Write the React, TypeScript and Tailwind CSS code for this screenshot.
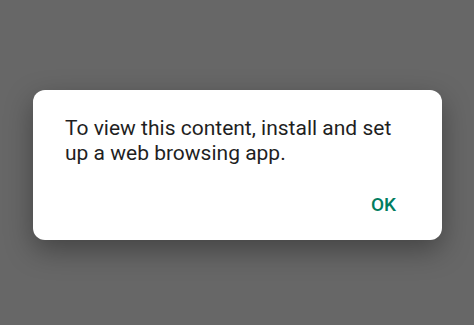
const App = () => {
  return (
    <div className="h-[325px] w-[474px] overflow-hidden bg-[#676767] pl-[33px] pt-[90px] font-['Roboto','Noto_Sans',sans-serif]">
      <div className="flex h-[150px] w-[409px] flex-col rounded-[12px] bg-white shadow-[0_10px_28px_rgba(0,0,0,0.35)]">
        {/* Message */}
        <p className="pl-[32px] pr-[32px] pt-[26px] text-[21px] leading-[25px] text-[#1f1f1f]">
          To view this content, install and set up a web browsing app.
        </p>

        {/* Action */}
        <div className="mt-[29px] flex justify-end pr-[46px]">
          <button className="text-[19px] font-medium leading-[19px] text-[#017d5f]">OK</button>
        </div>
      </div>
    </div>
  );
};

export default App;
